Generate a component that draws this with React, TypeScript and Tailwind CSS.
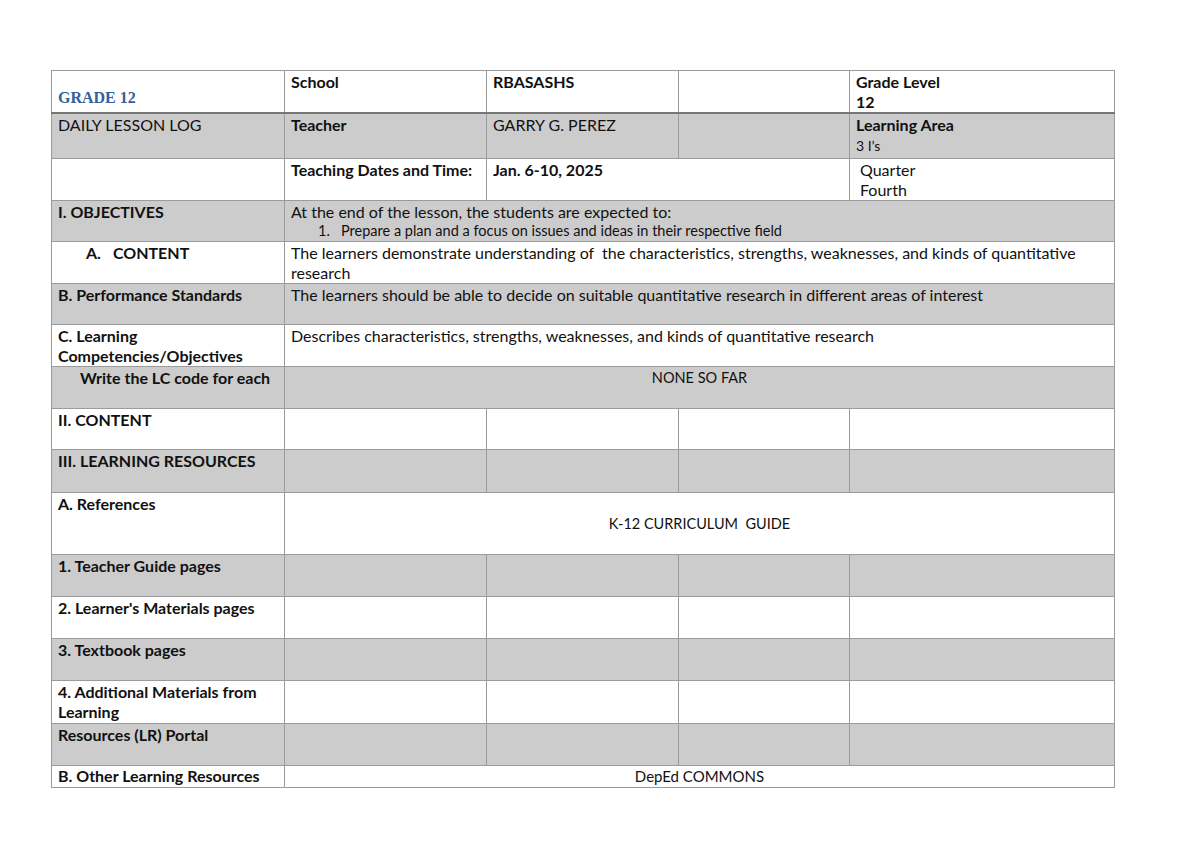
import React from 'react';

// Daily lesson log sheet — a plain bordered table, as printed from Word.

const box = 'border border-[#9b9b9b] px-[6px] leading-[20px]';
const cell = `${box} align-top pt-[1px]`;
const gray = 'bg-[#cccccc]';
const label = 'font-bold';

function EmptyCells({ shaded }: { shaded?: boolean }) {
  return (
    <>
      <td className={`${cell} ${shaded ? gray : ''}`} />
      <td className={`${cell} ${shaded ? gray : ''}`} />
      <td className={`${cell} ${shaded ? gray : ''}`} />
      <td className={`${cell} ${shaded ? gray : ''}`} />
    </>
  );
}

export default function App() {
  return (
    <div
      className="min-h-screen bg-white pl-[51px] pt-[70px] text-[16px] text-[#111]"
      style={{ fontFamily: 'Lato, "Open Sans", sans-serif' }}
    >
      <table className="w-[1063px] table-fixed border-collapse">
        <colgroup>
          <col className="w-[233px]" />
          <col className="w-[202px]" />
          <col className="w-[192px]" />
          <col className="w-[171px]" />
          <col className="w-[265px]" />
        </colgroup>
        <tbody>
          <tr className="h-[41px]">
            <td className={`${box} border-b-2 border-b-[#777] align-bottom pb-[4px]`}>
              <span
                className="text-[16px] font-bold text-[#36609a]"
                style={{ fontFamily: '"Liberation Serif", "DejaVu Serif", serif' }}
              >
                GRADE 12
              </span>
            </td>
            <td className={`${cell} ${label} border-b-2 border-b-[#777]`}>School</td>
            <td className={`${cell} ${label} border-b-2 border-b-[#777]`}>RBASASHS</td>
            <td className={`${cell} border-b-2 border-b-[#777]`} />
            <td className={`${cell} ${label} border-b-2 border-b-[#777]`}>
              Grade Level
              <br />
              12
            </td>
          </tr>
          <tr className={`h-[45px] ${gray}`}>
            <td className={cell}>DAILY LESSON LOG</td>
            <td className={`${cell} ${label}`}>Teacher</td>
            <td className={cell}>GARRY G. PEREZ</td>
            <td className={cell} />
            <td className={cell}>
              <span className="font-bold">Learning Area</span>
              <br />
              <span className="text-[14px]">3 I’s</span>
            </td>
          </tr>
          <tr className="h-[42px]">
            <td className={cell} />
            <td className={`${cell} ${label}`}>Teaching Dates and Time:</td>
            <td className={`${cell} ${label}`} colSpan={2}>
              Jan. 6-10, 2025
            </td>
            <td className={`${cell} pl-[10px]`}>
              Quarter
              <br />
              Fourth
            </td>
          </tr>
          <tr className={`h-[41px] ${gray}`}>
            <td className={`${cell} ${label}`}>I. OBJECTIVES</td>
            <td className={cell} colSpan={4}>
              At the end of the lesson, the students are expected to:
              <div className="flex pl-[27px] text-[14.5px] leading-[17px]">
                <span className="w-[23px]">1.</span>
                <span>Prepare a plan and a focus on issues and ideas in their respective field</span>
              </div>
            </td>
          </tr>
          <tr className="h-[42px]">
            <td className={`${cell} ${label} pl-[34px]`}>
              A.<span className="ml-[12px]">CONTENT</span>
            </td>
            <td className={cell} colSpan={4}>
              The learners demonstrate understanding of&nbsp; the characteristics, strengths, weaknesses, and kinds of
              quantitative
              <br />
              research
            </td>
          </tr>
          <tr className={`h-[41px] ${gray}`}>
            <td className={`${cell} ${label}`}>B. Performance Standards</td>
            <td className={cell} colSpan={4}>
              The learners should be able to decide on suitable quantitative research in different areas of interest
            </td>
          </tr>
          <tr className="h-[42px]">
            <td className={`${cell} ${label}`}>
              C. Learning
              <br />
              Competencies/Objectives
            </td>
            <td className={cell} colSpan={4}>
              Describes characteristics, strengths, weaknesses, and kinds of quantitative research
            </td>
          </tr>
          <tr className={`h-[42px] ${gray}`}>
            <td className={`${cell} ${label} pl-[28px]`}>Write the LC code for each</td>
            <td className={`${cell} text-center text-[14.5px]`} colSpan={4}>
              NONE SO FAR
            </td>
          </tr>
          <tr className="h-[41px]">
            <td className={`${cell} ${label}`}>II. CONTENT</td>
            <EmptyCells />
          </tr>
          <tr className="h-[43px]">
            <td className={`${cell} ${label} ${gray}`}>III. LEARNING RESOURCES</td>
            <EmptyCells shaded />
          </tr>
          <tr className="h-[62px]">
            <td className={`${cell} ${label}`}>A. References</td>
            <td className={`${box} text-center align-middle pt-[2px] text-[14.5px]`} colSpan={4}>
              K-12 CURRICULUM&nbsp; GUIDE
            </td>
          </tr>
          <tr className="h-[42px]">
            <td className={`${cell} ${label} ${gray}`}>1. Teacher Guide pages</td>
            <EmptyCells shaded />
          </tr>
          <tr className="h-[42px]">
            <td className={`${cell} ${label}`}>2. Learner's Materials pages</td>
            <EmptyCells />
          </tr>
          <tr className="h-[42px]">
            <td className={`${cell} ${label} ${gray}`}>3. Textbook pages</td>
            <EmptyCells shaded />
          </tr>
          <tr className="h-[43px]">
            <td className={`${cell} ${label}`}>
              4. Additional Materials from
              <br />
              Learning
            </td>
            <EmptyCells />
          </tr>
          <tr className="h-[42px]">
            <td className={`${cell} ${label} ${gray}`}>Resources (LR) Portal</td>
            <EmptyCells shaded />
          </tr>
          <tr className="h-[22px]">
            <td className={`${box} align-top ${label}`}>B. Other Learning Resources</td>
            <td className={`${box} align-top text-center text-[15px]`} colSpan={4}>
              DepEd COMMONS
            </td>
          </tr>
        </tbody>
      </table>
    </div>
  );
}
